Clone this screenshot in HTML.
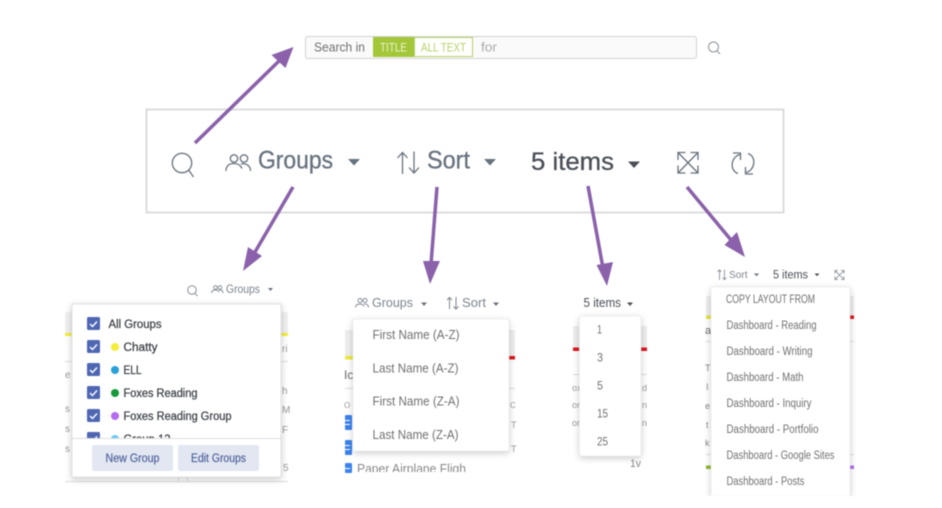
<!DOCTYPE html>
<html lang="en">
<head>
<meta charset="utf-8">
<title>Search, groups, sort and layout controls</title>
<style>
html,body{margin:0;padding:0;background:#fff;width:942px;height:508px;overflow:hidden}
svg{display:block;filter:blur(.4px)}
text{font-family:"Liberation Sans",sans-serif}
</style>
</head>
<body>
<svg width="942" height="508" viewBox="0 0 942 508" xmlns="http://www.w3.org/2000/svg">
<defs>
<filter id="sh" x="-20%" y="-20%" width="140%" height="140%"><feDropShadow dx="0" dy="2" stdDeviation="3.5" flood-color="#000" flood-opacity=".2"/></filter>
<clipPath id="c1"><rect x="72" y="304" width="209" height="134"/></clipPath>
<clipPath id="c2"><rect x="340" y="319" width="180" height="153"/></clipPath>
</defs>

<!-- search bar -->
<rect x="305.500" y="36.500" width="391" height="22" rx="2" fill="#fafafa" stroke="#d4d4d4"/>
<text x="314" y="51.500" font-size="13" fill="#6f6f6f" textLength="51" lengthAdjust="spacingAndGlyphs">Search in</text>
<rect x="373" y="37" width="41" height="20" fill="#a4c639"/>
<rect x="414.500" y="37.500" width="58" height="19" fill="#fff" stroke="#b5d164"/>
<text x="380" y="51.500" font-size="12" fill="#eef5d5" textLength="27" lengthAdjust="spacingAndGlyphs">TITLE</text>
<text x="421" y="51.500" font-size="12" fill="#b5d164" textLength="45" lengthAdjust="spacingAndGlyphs">ALL TEXT</text>
<text x="481" y="51.500" font-size="13" fill="#aaa" textLength="16" lengthAdjust="spacingAndGlyphs">for</text>
<g fill="none" stroke="#8a9199" stroke-width="1"><circle cx="713.500" cy="47" r="5"/><path d="M717 50.700 720 54"/></g>

<!-- enlarged toolbar -->
<rect x="146.500" y="109.500" width="637" height="103" fill="#fff" stroke="#dcdcdc" stroke-width="2"/>
<g fill="none" stroke="#67727e" stroke-width="1.300">
<circle cx="182" cy="163" r="9.700"/><path d="M189 170.500 193.500 177"/>
<circle cx="234" cy="158.500" r="3.700"/><circle cx="244" cy="158.500" r="3.700"/>
<path d="M226 171c0-5 3-7.500 8-7.500s7 2.500 8 5M241 164c5-1 9.500 1.500 9.500 7"/>
<path d="M402.500 174V152.500M397.500 158l5-5.500 5 5.500M414 151.500V173M409 167.500l5 5.500 5-5.500"/>
</g>
<text x="258" y="168.500" font-size="25" fill="#67727e" stroke="#67727e" stroke-width=".3" textLength="75" lengthAdjust="spacingAndGlyphs">Groups</text>
<path d="M348 159h12l-6 6.500z" fill="#67727e"/>
<text x="427" y="168.500" font-size="25" fill="#67727e" stroke="#67727e" stroke-width=".3" textLength="43" lengthAdjust="spacingAndGlyphs">Sort</text>
<path d="M484 159h12l-6 6.500z" fill="#67727e"/>
<text x="531" y="170" font-size="25" fill="#4a4f57" stroke="#4a4f57" stroke-width=".3" textLength="83" lengthAdjust="spacingAndGlyphs">5 items</text>
<path d="M628 161.500h12l-6 6.500z" fill="#4a4f57"/>
<g fill="none" stroke="#67727e" stroke-width="1.300">
<path d="M678 152.500 698 173M698 152.500 678 173M678 160v-7.500h7.500M690.500 152.500h7.500V160M678 165.500v7.500h7.500M690.500 173h7.500v-7.500"/>
<path d="M740 154.500c-9 2-11 16-2 19M746 172.500c9-2 11-16 2-19M733 153h7.500v7M753 174h-7.500v-7"/>
</g>

<!-- arrows -->
<g stroke="#8a61aa" stroke-width="3.500" fill="#8a61aa">
<path d="M195 143 279 61"/><path d="M293.500 47 285.500 68 271.500 55z" stroke="none"/>
<path d="M293 187 255 252"/><path d="M243 271 248 247 262 256z" stroke="none"/>
<path d="M437 187 431 264"/><path d="M430 284 423 261 440 261z" stroke="none"/>
<path d="M588 186 603 268"/><path d="M607 286 596.500 265 613 262z" stroke="none"/>
<path d="M687 187 731 240"/><path d="M745 257 724.500 245 737 232z" stroke="none"/>
</g>

<!-- panel 1 background -->
<rect x="65" y="312" width="7" height="22" fill="#f0f0f0"/><rect x="281" y="312" width="7" height="22" fill="#f0f0f0"/>
<rect x="65" y="333" width="7" height="3" fill="#f4ee3a"/><rect x="281" y="333" width="7" height="3" fill="#f4ee3a"/>
<rect x="65" y="361" width="7" height="1" fill="#ddd"/><rect x="281" y="361" width="7" height="1" fill="#ddd"/>
<rect x="65" y="481" width="223" height="1" fill="#ddd"/>
<rect x="178" y="477" width="1" height="5" fill="#ddd"/><rect x="187" y="477" width="1" height="5" fill="#ddd"/>
<g font-size="10" fill="#999"><text x="65" y="378">e</text><text x="65" y="412">s</text><text x="65" y="432">s</text><text x="65" y="452">s</text><text x="282" y="352">ri</text><text x="282" y="394">h</text><text x="282" y="413">M</text><text x="282" y="433">F</text><text x="283" y="471">5</text></g>

<!-- panel 1 header -->
<g fill="none" stroke="#8a9199" stroke-width="1"><circle cx="192" cy="290" r="4.300"/><path d="M195 293.500 197.500 296"/></g>
<g fill="none" stroke="#7c858e" stroke-width=".9"><circle cx="215.500" cy="287.500" r="1.800"/><circle cx="220" cy="287.500" r="1.800"/><path d="M211.500 293c0-2 1.500-3 4-3s3 1 3.500 2M219 290c2.500-.4 4 .8 4 3"/></g>
<text x="226" y="293" font-size="11.500" fill="#7c858e" textLength="34" lengthAdjust="spacingAndGlyphs">Groups</text>
<path d="M268 288h5l-2.500 3z" fill="#67727e"/>

<!-- panel 1 menu -->
<rect x="72" y="304" width="209" height="173" fill="#fff" stroke="#e0e0e0" stroke-width="1" filter="url(#sh)"/>
<g clip-path="url(#c1)">
<g fill="#4f67b3">
<rect x="87" y="317" width="13" height="13" rx="1.500"/><rect x="87" y="340" width="13" height="13" rx="1.500"/><rect x="87" y="363" width="13" height="13" rx="1.500"/><rect x="87" y="386" width="13" height="13" rx="1.500"/><rect x="87" y="409" width="13" height="13" rx="1.500"/><rect x="87" y="432" width="13" height="13" rx="1.500"/>
</g>
<g fill="none" stroke="#fff" stroke-width="1.400">
<path d="M90 324l2.500 2.500 4.500-5"/><path d="M90 347l2.500 2.500 4.500-5"/><path d="M90 370l2.500 2.500 4.500-5"/><path d="M90 393l2.500 2.500 4.500-5"/><path d="M90 416l2.500 2.500 4.500-5"/><path d="M90 439l2.500 2.500 4.500-5"/>
</g>
<circle cx="115" cy="347" r="4" fill="#f4ee3a"/><circle cx="115" cy="370" r="4" fill="#2a9fd8"/><circle cx="115" cy="393" r="4" fill="#169a3a"/><circle cx="115" cy="416" r="4" fill="#b46cf0"/><circle cx="115" cy="439" r="4" fill="#66c8f5"/>
<g font-size="11.500" fill="#3a3f45" stroke="#3a3f45" stroke-width=".25">
<text x="108.500" y="328" textLength="53" lengthAdjust="spacingAndGlyphs">All Groups</text>
<text x="123.500" y="351" textLength="34" lengthAdjust="spacingAndGlyphs">Chatty</text>
<text x="123.500" y="374" textLength="18" lengthAdjust="spacingAndGlyphs">ELL</text>
<text x="123.500" y="397" textLength="74" lengthAdjust="spacingAndGlyphs">Foxes Reading</text>
<text x="123.500" y="420" textLength="108" lengthAdjust="spacingAndGlyphs">Foxes Reading Group</text>
<text x="123.500" y="443" textLength="47" lengthAdjust="spacingAndGlyphs">Group 12</text>
</g>
</g>
<rect x="72" y="438" width="209" height="1" fill="#dcdcdc"/>
<rect x="92" y="445" width="81" height="26" rx="2" fill="#e3e7f2"/><rect x="178" y="445" width="81" height="26" rx="2" fill="#e3e7f2"/>
<g font-size="11.500" fill="#4a5f99" stroke="#4a5f99" stroke-width=".15">
<text x="105.500" y="462" textLength="54" lengthAdjust="spacingAndGlyphs">New Group</text>
<text x="191" y="462" textLength="55" lengthAdjust="spacingAndGlyphs">Edit Groups</text>
</g>

<!-- panel 2 background -->
<rect x="345" y="330" width="8" height="27" fill="#ededed"/><rect x="509" y="330" width="6" height="27" fill="#ededed"/>
<rect x="345" y="356" width="8" height="3.500" fill="#eeea3a"/><rect x="509" y="356" width="6" height="3.500" fill="#e0141e"/>
<rect x="345" y="388" width="8" height="1" fill="#ddd"/><rect x="509" y="388" width="6" height="1" fill="#ddd"/>
<text x="344" y="379" font-size="12" fill="#666">Ic</text>
<text x="344" y="408" font-size="8" fill="#999">O</text>
<text x="510" y="408" font-size="8" fill="#999">C</text>
<text x="511" y="428" font-size="9" fill="#999">T</text>
<text x="511" y="452" font-size="9" fill="#999">T</text>
<rect x="345" y="415" width="7" height="15" rx="1" fill="#3b82ec"/><rect x="345" y="440" width="7" height="15" rx="1" fill="#3b82ec"/>
<rect x="345" y="463" width="7" height="10" rx="1" fill="#3b82ec"/>
<g fill="#fff"><rect x="345" y="420" width="5" height="1"/><rect x="345" y="424" width="5" height="1"/><rect x="345" y="445" width="5" height="1"/><rect x="345" y="449" width="5" height="1"/><rect x="345" y="468" width="5" height="1"/></g>
<g clip-path="url(#c2)"><text x="357" y="473" font-size="12.500" fill="#888" textLength="109" lengthAdjust="spacingAndGlyphs">Paper Airplane Fligh</text></g>

<!-- panel 2 header -->
<g fill="none" stroke="#7c858e" stroke-width=".9"><circle cx="360" cy="300.500" r="2"/><circle cx="365" cy="300.500" r="2"/><path d="M355.500 307.500c0-2.500 2-3.500 4.500-3.500s3.500 1 4 2.500M364 304c2.500-.4 4.500 1 4.500 3.500"/></g>
<text x="372" y="307" font-size="13" fill="#7c858e" textLength="41" lengthAdjust="spacingAndGlyphs">Groups</text>
<path d="M421 302.500h6l-3 3.500z" fill="#67727e"/>
<g fill="none" stroke="#7c858e" stroke-width="1"><path d="M449.500 309V297.500M447 300l2.500-2.500 2.500 2.500M456 297v12M453.500 306.500l2.500 2.500 2.500-2.500"/></g>
<text x="462" y="307" font-size="13" fill="#7c858e" textLength="24" lengthAdjust="spacingAndGlyphs">Sort</text>
<path d="M493 302.500h6l-3 3.500z" fill="#67727e"/>

<!-- panel 2 menu -->
<rect x="353" y="319" width="156" height="132" rx="2" fill="#fff" stroke="#e2e2e2" stroke-width=".5" filter="url(#sh)"/>
<g font-size="13" fill="#707070">
<text x="372.500" y="339" textLength="87" lengthAdjust="spacingAndGlyphs">First Name (A-Z)</text>
<text x="372.500" y="372.500" textLength="86" lengthAdjust="spacingAndGlyphs">Last Name (A-Z)</text>
<text x="372.500" y="405.500" textLength="87" lengthAdjust="spacingAndGlyphs">First Name (Z-A)</text>
<text x="372.500" y="439" textLength="86" lengthAdjust="spacingAndGlyphs">Last Name (Z-A)</text>
</g>

<!-- panel 3 background -->
<rect x="573" y="326" width="6" height="22" fill="#ededed"/><rect x="641" y="326" width="6" height="22" fill="#ededed"/>
<rect x="573" y="347.500" width="6" height="3.500" fill="#e0141e"/><rect x="641" y="347.500" width="6" height="3.500" fill="#e0141e"/>
<rect x="573" y="374" width="6" height="1" fill="#ddd"/><rect x="641" y="374" width="6" height="1" fill="#ddd"/>
<g font-size="9" fill="#999"><text x="572" y="391">ox</text><text x="642" y="391">d</text><text x="572" y="408">or</text><text x="642" y="408">n</text><text x="572" y="426">or</text><text x="642" y="426">n</text></g>
<text x="630" y="467" font-size="11" fill="#888" textLength="11" lengthAdjust="spacingAndGlyphs">1v</text>

<!-- panel 3 header & menu -->
<text x="583.500" y="307" font-size="12.500" fill="#4a4f57" textLength="37.500" lengthAdjust="spacingAndGlyphs">5 items</text>
<path d="M627 302.500h6l-3 3.500z" fill="#4a4f57"/>
<rect x="579.500" y="316" width="61.500" height="140" rx="2" fill="#fff" stroke="#e2e2e2" stroke-width=".5" filter="url(#sh)"/>
<g font-size="11.500" fill="#707070">
<text x="597" y="333.500" textLength="5" lengthAdjust="spacingAndGlyphs">1</text>
<text x="597" y="361.500" textLength="6" lengthAdjust="spacingAndGlyphs">3</text>
<text x="597" y="389.500" textLength="6" lengthAdjust="spacingAndGlyphs">5</text>
<text x="597" y="417.500" textLength="11" lengthAdjust="spacingAndGlyphs">15</text>
<text x="597" y="445.500" textLength="11" lengthAdjust="spacingAndGlyphs">25</text>
</g>

<!-- panel 4 background -->
<rect x="706" y="296" width="5" height="20" fill="#ededed"/><rect x="850" y="296" width="4" height="20" fill="#ededed"/>
<rect x="706" y="315.500" width="5" height="3.500" fill="#e6e63a"/><rect x="850" y="315.500" width="4" height="3.500" fill="#e0141e"/>
<rect x="706" y="341" width="5" height="1" fill="#ddd"/><rect x="850" y="341" width="4" height="1" fill="#ddd"/>
<rect x="706" y="454" width="5" height="1" fill="#ddd"/><rect x="850" y="454" width="4" height="1" fill="#ddd"/>
<rect x="706" y="465.500" width="5" height="3.500" fill="#8fb82e"/><rect x="850" y="465.500" width="4" height="3.500" fill="#b46cf0"/>
<g font-size="9" fill="#888"><text x="705" y="334" font-size="11" fill="#666">a</text><text x="705" y="371">T</text><text x="706" y="390">I</text><text x="705" y="409">e</text><text x="706" y="428">t</text><text x="705" y="446">k</text></g>

<!-- panel 4 header -->
<g fill="none" stroke="#8a929a" stroke-width=".9"><path d="M719.500 280V270M717.500 272l2 -2.200 2 2.200M724.500 269.500v10M722.500 277.500l2 2.200 2-2.200"/></g>
<text x="729" y="278" font-size="10.500" fill="#7c858e" textLength="18.500" lengthAdjust="spacingAndGlyphs">Sort</text>
<path d="M754 273.500h5l-2.500 2.800z" fill="#67727e"/>
<text x="773" y="278.500" font-size="11.500" fill="#4a4f57" textLength="35" lengthAdjust="spacingAndGlyphs">5 items</text>
<path d="M814.500 273.500h5l-2.500 2.800z" fill="#4a4f57"/>
<g fill="none" stroke="#7c858e" stroke-width=".8"><path d="M835 270.500 844 279.500M844 270.500 835 279.500M835 273.500v-3h3M841 270.500h3v3M835 276.500v3h3M841 279.500h3v-3"/></g>

<!-- panel 4 menu -->
<path d="M711 496V289a2 2 0 0 1 2-2h135a2 2 0 0 1 2 2V496z" fill="#fff" stroke="#e4e4e4" stroke-width=".5" filter="url(#sh)"/>
<rect x="700" y="496" width="160" height="12" fill="#fff"/>
<g font-size="11.500" fill="#707070">
<text x="726" y="303" textLength="89" lengthAdjust="spacingAndGlyphs">COPY LAYOUT FROM</text>
<text x="726.500" y="329" textLength="90" lengthAdjust="spacingAndGlyphs">Dashboard - Reading</text>
<text x="726.500" y="355" textLength="86" lengthAdjust="spacingAndGlyphs">Dashboard - Writing</text>
<text x="726.500" y="381" textLength="77" lengthAdjust="spacingAndGlyphs">Dashboard - Math</text>
<text x="726.500" y="407" textLength="85" lengthAdjust="spacingAndGlyphs">Dashboard - Inquiry</text>
<text x="726.500" y="433" textLength="92" lengthAdjust="spacingAndGlyphs">Dashboard - Portfolio</text>
<text x="726.500" y="459" textLength="108" lengthAdjust="spacingAndGlyphs">Dashboard - Google Sites</text>
<text x="726.500" y="485" textLength="78" lengthAdjust="spacingAndGlyphs">Dashboard - Posts</text>
</g>
</svg>
</body>
</html>
